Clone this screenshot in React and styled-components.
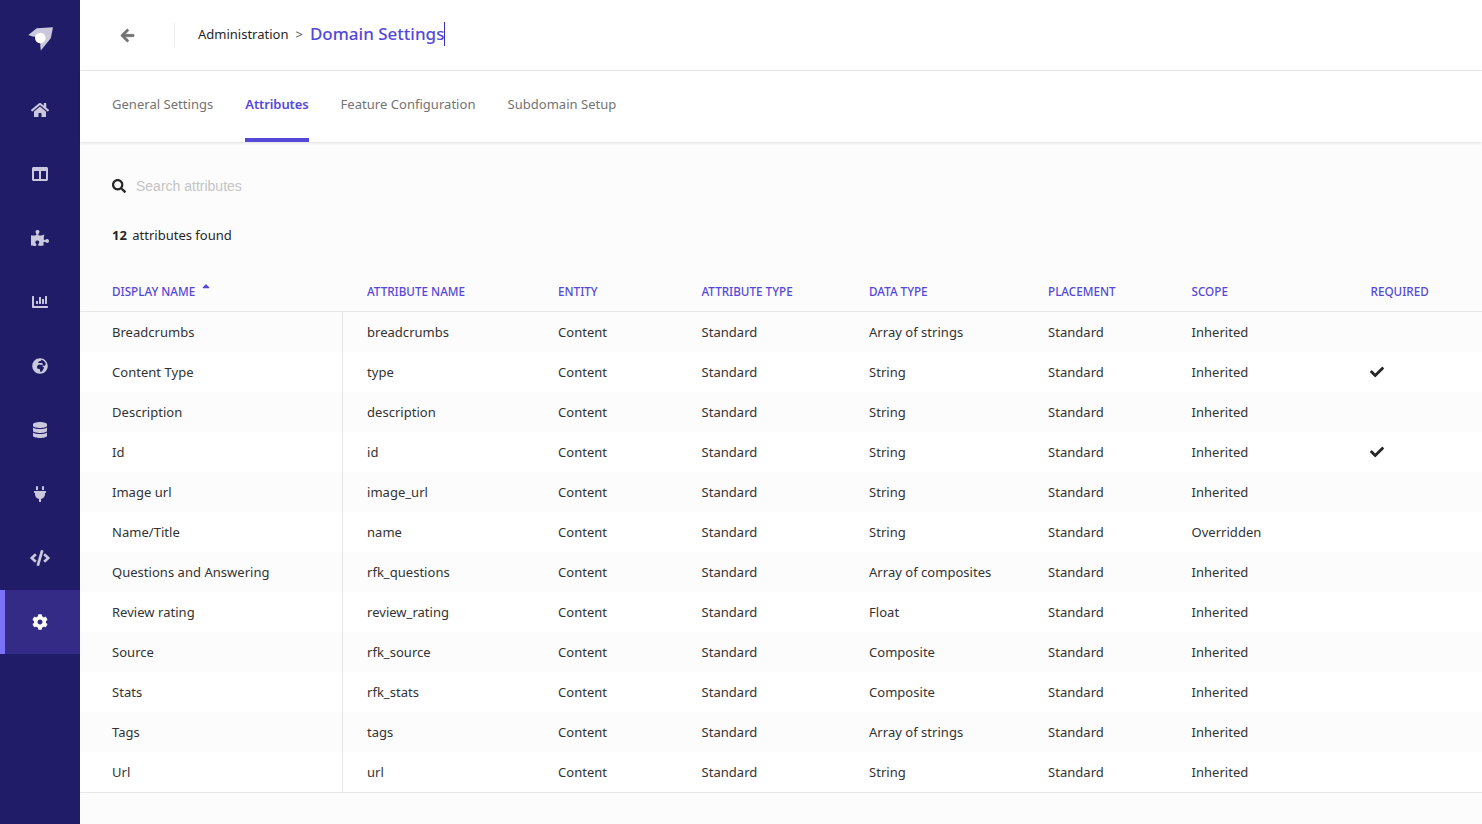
import React from "react"
import styled, { createGlobalStyle } from "styled-components"
import {
  FaHome, FaColumns, FaPuzzlePiece, FaChartBar, FaGlobeAfrica, FaDatabase, FaPlug,
  FaCode, FaCog, FaArrowLeft, FaSearch, FaCheck, FaSortUp,
} from "react-icons/fa"

const GlobalStyle = createGlobalStyle`
  html, body {
    margin: 0;
    padding: 0;
    height: 100%;
    overflow: hidden;
    background: #fcfcfc;
    font-family: "Noto Sans", "Open Sans", sans-serif;
    color: #262626;
  }
  * { box-sizing: border-box; }
`

const Page = styled.div`
  display: flex;
  width: 1482px;
  height: 824px;
`

const Sidebar = styled.nav`
  width: 80px;
  flex-shrink: 0;
  background: #211c67;
  display: flex;
  flex-direction: column;
`

const LogoBox = styled.div`
  height: 78px;
  display: flex;
  align-items: center;
  justify-content: center;
  padding-left: 1px;
`

const NavItem = styled.div`
  height: 64px;
  display: flex;
  align-items: center;
  justify-content: center;
  color: ${p => (p.$active ? "#fff" : "#c9c8dc")};
  background: ${p => (p.$active ? "#332b85" : "transparent")};
  border-left: ${p => (p.$active ? "5px solid #7b72f7" : "0")};
  padding-right: ${p => (p.$active ? "5px" : "0")};
  svg {
    flex-shrink: 0;
    width: ${p => p.$iconWidth}px;
    height: 16px;
  }
`

const Main = styled.main`
  flex: 1;
  min-width: 0;
  display: flex;
  flex-direction: column;
`

const Header = styled.header`
  height: 71px;
  background: #fff;
  border-bottom: 1px solid #e9e9e9;
  display: flex;
  align-items: center;
  padding-left: 40px;
`

const BackBtn = styled.div`
  color: #737373;
  font-size: 15px;
  display: flex;
  width: 55px;
  height: 24px;
  align-items: center;
  border-right: 1px solid #ececec;
  svg {
    stroke: currentColor;
    stroke-width: 24px;
  }
`

const Crumb = styled.span`
  margin-left: 23px;
  font-size: 13px;
  margin-top: -2px;
`

const CrumbSep = styled.span`
  font-size: 13px;
  color: #555;
  margin: -2px 7px 0;
`

const PageTitle = styled.h1`
  margin: -2px 0 0;
  font-size: 17px;
  font-weight: 500;
  color: #5548d9;
  border-right: 1px solid #3a2fc0;
  line-height: 24px;
`

const Tabs = styled.div`
  height: 71px;
  background: #fff;
  display: flex;
  gap: 32px;
  padding-left: 32px;
  box-shadow: 0 1px 3px rgba(0, 0, 0, 0.12);
`

const Tab = styled.div`
  height: 71px;
  display: flex;
  align-items: center;
  padding-bottom: 1px;
  font-size: 13px;
  letter-spacing: ${p => (p.$active ? "-0.1px" : "0.03px")};
  font-weight: ${p => (p.$active ? 600 : 400)};
  color: ${p => (p.$active ? "#5548d9" : "#737373")};
  border-bottom: 4px solid ${p => (p.$active ? "#5548d9" : "transparent")};
`

const SearchRow = styled.div`
  display: flex;
  align-items: center;
  margin-top: 35px;
  padding-left: 32px;
  height: 18px;
  font-size: 14px;
  color: #262626;
`

const SearchInput = styled.input`
  border: 0;
  outline: 0;
  background: transparent;
  margin-left: 10px;
  padding: 0;
  width: 240px;
  font-family: "Liberation Sans", Arial, sans-serif;
  font-size: 14px;
  &::placeholder { color: #c4c4c4; opacity: 1; }
`

const Count = styled.div`
  margin-top: 30px;
  padding-left: 32px;
  font-size: 13px;
  line-height: 20px;
  b {
    font-weight: 700;
    margin-right: 2px;
  }
`

const Table = styled.table`
  margin-top: 23px;
  width: 1402px;
  table-layout: fixed;
  border-collapse: separate;
  border-spacing: 0;
  border-bottom: 1px solid #e6e6e6;
`

const Th = styled.th`
  height: 44px;
  padding: 2px 0 0 24px;
  text-align: left;
  font-size: 11.7px;
  font-weight: 500;
  color: #5548d9;
  border-bottom: 1px solid #e6e6e6;
  white-space: nowrap;
  &:first-child { padding-left: 32px; }
`

const SortMark = styled.span`
  display: inline-flex;
  margin-left: 5px;
  font-size: 12px;
  vertical-align: 1px;
`

const Row = styled.tr`
  height: 40px;
  background: ${p => (p.$odd ? "#fff" : "#fcfcfc")};
`

const Td = styled.td`
  padding: 0 0 0 24px;
  font-size: 13px;
  letter-spacing: 0.03px;
  color: #333;
  white-space: nowrap;
  &:first-child {
    padding-left: 32px;
    border-right: 1px solid #e6e6e6;
  }
`

const Check = styled(FaCheck)`
  display: block;
  font-size: 14px;
  color: #262626;
  margin-left: -1px;
`

// logo: a kite shape with a white dot
const Logo = () => (
  <svg width="26" height="24" viewBox="0 0 26 24">
    <path d="M0.300 8 8.700 1.300 25 0.300 22.800 11.300 12.800 23.500 12 16.500 7 10.300Z" fill="#c9c8dc" />
    <path d="M6.400 9.500A6.300 6.300 0 0 0 12.300 17.300" fill="none" stroke="#211c67" strokeWidth="1.200" />
    <circle cx="12.300" cy="11" r="5.300" fill="#fff" />
  </svg>
)

const navIcons = [
  [FaHome, 18], [FaColumns, 16], [FaPuzzlePiece, 18], [FaChartBar, 16], [FaGlobeAfrica, 16],
  [FaDatabase, 14], [FaPlug, 12], [FaCode, 20], [FaCog, 16],
]

const tabs = ["General Settings", "Attributes", "Feature Configuration", "Subdomain Setup"]

const columns = [
  { title: "DISPLAY NAME", width: 263 },
  { title: "ATTRIBUTE NAME", width: 191 },
  { title: "ENTITY", width: 143.5 },
  { title: "ATTRIBUTE TYPE", width: 167.5 },
  { title: "DATA TYPE", width: 179 },
  { title: "PLACEMENT", width: 143.5 },
  { title: "SCOPE", width: 179 },
  { title: "REQUIRED", width: 136 },
]

const rows = [
  ["Breadcrumbs", "breadcrumbs", "Array of strings", "Inherited", false],
  ["Content Type", "type", "String", "Inherited", true],
  ["Description", "description", "String", "Inherited", false],
  ["Id", "id", "String", "Inherited", true],
  ["Image url", "image_url", "String", "Inherited", false],
  ["Name/Title", "name", "String", "Overridden", false],
  ["Questions and Answering", "rfk_questions", "Array of composites", "Inherited", false],
  ["Review rating", "review_rating", "Float", "Inherited", false],
  ["Source", "rfk_source", "Composite", "Inherited", false],
  ["Stats", "rfk_stats", "Composite", "Inherited", false],
  ["Tags", "tags", "Array of strings", "Inherited", false],
  ["Url", "url", "String", "Inherited", false],
]

export default function App() {
  return (
    <Page>
      <GlobalStyle />
      <Sidebar>
        <LogoBox><Logo /></LogoBox>
        {navIcons.map(([Icon, w], i) => (
          <NavItem key={i} $active={i === 8} $iconWidth={w}><Icon /></NavItem>
        ))}
      </Sidebar>
      <Main>
        <Header>
          <BackBtn><FaArrowLeft /></BackBtn>
          <Crumb>Administration</Crumb>
          <CrumbSep>&gt;</CrumbSep>
          <PageTitle>Domain Settings</PageTitle>
        </Header>
        <Tabs>
          {tabs.map(t => <Tab key={t} $active={t === "Attributes"}>{t}</Tab>)}
        </Tabs>
        <SearchRow>
          <FaSearch />
          <SearchInput placeholder="Search attributes" readOnly />
        </SearchRow>
        <Count><b>12</b> attributes found</Count>
        <Table>
          <colgroup>
            {columns.map(c => <col key={c.title} style={{ width: c.width }} />)}
          </colgroup>
          <thead>
            <tr>
              {columns.map((c, i) => (
                <Th key={c.title}>
                  {c.title}
                  {i === 0 && <SortMark><FaSortUp /></SortMark>}
                </Th>
              ))}
            </tr>
          </thead>
          <tbody>
            {rows.map((r, i) => (
              <Row key={r[0]} $odd={i % 2 === 1}>
                <Td>{r[0]}</Td>
                <Td>{r[1]}</Td>
                <Td>Content</Td>
                <Td>Standard</Td>
                <Td>{r[2]}</Td>
                <Td>Standard</Td>
                <Td>{r[3]}</Td>
                <Td>{r[4] && <Check />}</Td>
              </Row>
            ))}
          </tbody>
        </Table>
      </Main>
    </Page>
  )
}
